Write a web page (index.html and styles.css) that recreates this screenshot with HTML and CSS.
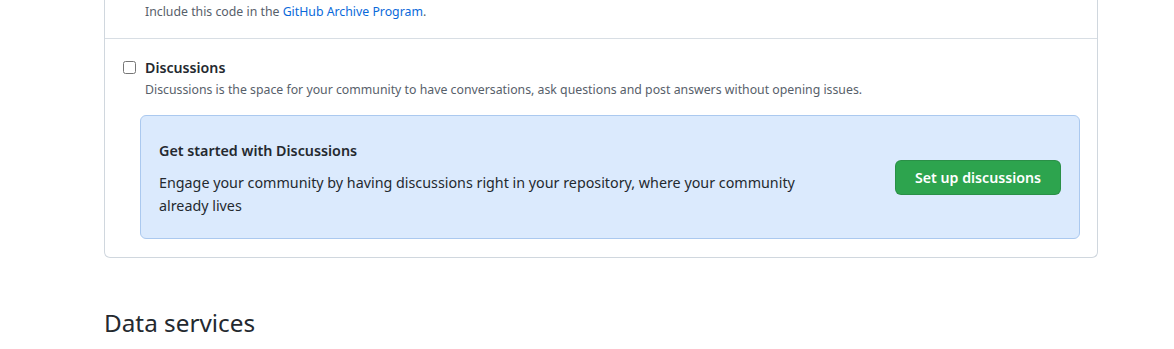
FILE: index.html
```html
<!DOCTYPE html>
<html lang="en">
<head>
  <meta charset="UTF-8">
  <meta name="viewport" content="width=device-width, initial-scale=1.0">
  <title>Settings - Features</title>
  <link rel="stylesheet" href="styles.css">
</head>
<body>

  <div class="page">
    <div class="features-box">
      <!-- previous item (archive) -->
      <div class="feature-item feature-tail">
        <p class="note">Include this code in the <a href="#">GitHub Archive Program</a>.</p>
      </div>

      <!-- Discussions -->
      <div class="feature-item">
        <div class="check-row">
          <input type="checkbox" id="discussions">
          <div class="check-body">
            <label for="discussions">Discussions</label>
            <p class="note">Discussions is the space for your community to have conversations, ask questions and post answers without opening issues.</p>

            <div class="callout">
              <div class="callout-text">
                <h3>Get started with Discussions</h3>
                <p>Engage your community by having discussions right in your repository, where your community already lives</p>
              </div>
              <button class="btn-primary">Set up discussions</button>
            </div>
          </div>
        </div>
      </div>
    </div>

    <h2 class="section-title">Data services</h2>
  </div>

</body>
</html>
```

FILE: styles.css
```css
body {
  margin: 0;
  font-family: "Noto Sans", "Open Sans", Arial, sans-serif;
  color: #24292f;
  background-color: #fff;
}

.page {
  width: 994px;
  margin-left: 104px;
}

.features-box {
  border: 1px solid #d0d7de;
  border-top: none;
  border-radius: 0 0 6px 6px;
}

.feature-item {
  padding: 19px 17px 18px 17px;
}

.feature-tail {
  padding: 3px 16px 17px 40px;
  border-bottom: 1px solid #d8dee4;
}

.note {
  margin: 0;
  font-size: 12.3px;
  line-height: 18px;
  color: #57606a;
}

.note a {
  color: #0969da;
  text-decoration: none;
}

.check-row {
  display: flex;
  align-items: flex-start;
}

.check-row input {
  width: 13px;
  height: 13px;
  margin: 3px 9px 0 1px;
  flex-shrink: 0;
}

.check-body {
  flex: 1;
}

.check-body label {
  display: block;
  font-size: 14.2px;
  font-weight: 600;
  line-height: 20px;
  margin-bottom: 3px;
}

.callout {
  display: flex;
  align-items: center;
  justify-content: space-between;
  margin: 16px 0 0 -5px;
  padding: 23px 18px 21px 18px;
  background-color: #dbeafd;
  border: 1px solid #abc9ef;
  border-radius: 6px;
}

.callout-text {
  max-width: 680px;
}

.callout h3 {
  margin: 0 0 8px;
  font-size: 14.3px;
  font-weight: 600;
  line-height: 24px;
}

.callout p {
  margin: 0;
  font-size: 14.3px;
  line-height: 23px;
}

.btn-primary {
  height: 35px;
  margin-bottom: 2px;
  padding: 0 19px;
  font-family: inherit;
  font-size: 14.2px;
  font-weight: 600;
  color: #fff;
  background-color: #2da44e;
  border: 1px solid rgba(27, 31, 36, 0.15);
  border-radius: 6px;
  cursor: pointer;
}

.section-title {
  margin: 50px 0 0;
  font-size: 24.3px;
  font-weight: 400;
  line-height: 30px;
}
```
